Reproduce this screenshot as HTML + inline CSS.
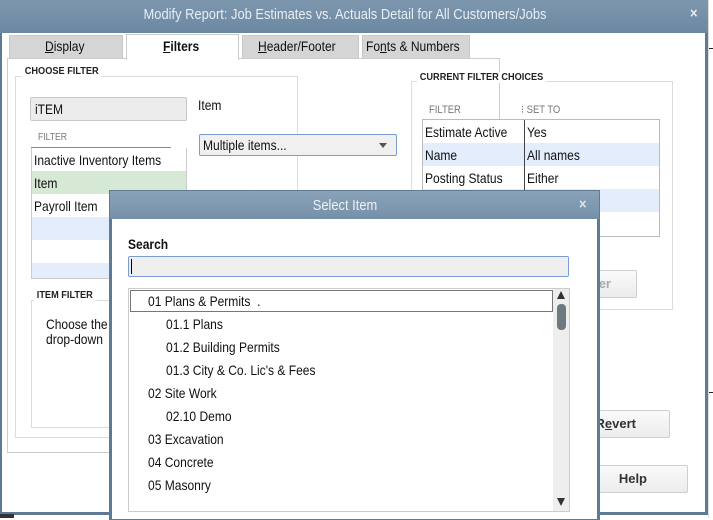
<!DOCTYPE html>
<html><head><style>
*{margin:0;padding:0;box-sizing:border-box}
body{width:713px;height:518px;overflow:hidden;background:#fff;font-family:"Liberation Sans",sans-serif;font-size:12px;color:#111;position:relative}
.a{position:absolute}
.t{position:absolute;white-space:nowrap;transform:scaleX(.86);transform-origin:0 0}
.c{transform-origin:50% 0}
.grp{position:absolute;border:1px solid #dcdcdc}
.gl{position:absolute;background:#fff;padding:0 3px;font-size:10px;font-weight:bold;color:#222;transform:scaleX(.92);transform-origin:0 0;white-space:nowrap}
.btn{position:absolute;border:1px solid #cfcfcf;border-radius:2px;background:linear-gradient(#fafafa,#ececec);font-size:13px;font-weight:bold;color:#333;text-align:center}
</style></head><body>
<div class="a" style="left:0;top:0;width:708px;height:515px;background:#5f7a93"></div>
<div class="a" style="left:0;top:0;width:708px;height:33px;background:linear-gradient(#7d97ae,#6c88a1)"></div>
<div class="t c" style="left:0;width:690px;top:6px;text-align:center;color:#e8eef3;font-size:15px">Modify Report: Job Estimates vs. Actuals Detail for All Customers/Jobs</div>
<div class="t" style="left:690px;top:5px;color:#e8eef3;font-size:15px;font-weight:bold">×</div>
<div class="a" style="left:2px;top:33px;width:703px;height:479px;background:#fff"></div>
<div class="a" style="left:708px;top:0;width:5px;height:518px;background:#fff;border-left:1px solid #ddd"></div>
<div class="a" style="left:709px;top:48px;width:4px;height:1px;background:#222"></div>
<div class="a" style="left:709px;top:392px;width:4px;height:1px;background:#222"></div>
<div class="a" style="left:0;top:514px;width:14px;height:4px;background:#333"></div>
<div class="a" style="left:9px;top:35px;width:114px;height:24px;background:#d5d5d5;border:1px solid #c8c8c8"></div>
<div class="t" style="left:45px;top:38px;font-size:14px"><u>D</u>isplay</div>
<div class="a" style="left:126px;top:34px;width:113px;height:26px;background:#fff;border:1px solid #ccc;border-bottom:none"></div>
<div class="t" style="left:163px;top:38px;font-size:14px;font-weight:bold"><u>F</u>ilters</div>
<div class="a" style="left:242px;top:35px;width:117px;height:24px;background:#d5d5d5;border:1px solid #c8c8c8"></div>
<div class="t" style="left:258px;top:38px;font-size:14px"><u>H</u>eader/Footer</div>
<div class="a" style="left:362px;top:35px;width:108px;height:24px;background:#d5d5d5;border:1px solid #c8c8c8"></div>
<div class="t" style="left:366px;top:38px;font-size:14px">Fo<u>n</u>ts &amp; Numbers</div>
<div class="a" style="left:7px;top:58px;width:493px;height:395px;border:1px solid #ccc"></div>
<div class="a" style="left:127px;top:58px;width:111px;height:2px;background:#fff"></div>
<div class="grp" style="left:15px;top:76px;width:283px;height:362px"></div>
<div class="gl" style="left:22px;top:66px">CHOOSE FILTER</div>
<div class="a" style="left:30px;top:97px;width:157px;height:24px;background:#ececec;border:1px solid #c8c8c8;border-radius:2px"></div>
<div class="t" style="left:35px;top:101px;font-size:14px">iTEM</div>
<div class="t" style="left:198px;top:97px;font-size:14px">Item</div>
<div class="t" style="left:38px;top:132px;font-size:10px;color:#777">FILTER</div>
<div class="a" style="left:31px;top:147px;width:140px;height:1px;background:#888"></div>
<div class="a" style="left:31px;top:148px;width:156px;height:131px;border:1px solid #ccc;border-top:none;background:#fff"></div>
<div class="a" style="left:32px;top:171px;width:154px;height:23px;background:#d6e9d4"></div>
<div class="a" style="left:32px;top:217px;width:154px;height:23px;background:#e3edfb"></div>
<div class="a" style="left:32px;top:263px;width:154px;height:15px;background:#e3edfb"></div>
<div class="t" style="left:34px;top:152px;font-size:14px">Inactive Inventory Items</div>
<div class="t" style="left:34px;top:175px;font-size:14px">Item</div>
<div class="t" style="left:34px;top:198px;font-size:14px">Payroll Item</div>
<div class="a" style="left:199px;top:134px;width:198px;height:22px;background:#f0f0f0;border:1px solid #7a9cd3;border-radius:2px"></div>
<div class="t" style="left:203px;top:137px;font-size:14px">Multiple items...</div>
<div class="a" style="left:379px;top:143px;width:0;height:0;border-left:4px solid transparent;border-right:4px solid transparent;border-top:5px solid #555"></div>
<div class="grp" style="left:31px;top:300px;width:100px;height:128px;border-right:none"></div>
<div class="gl" style="left:34px;top:290px">ITEM FILTER</div>
<div class="t" style="left:46px;top:316px;font-size:14px">Choose the</div>
<div class="t" style="left:46px;top:331px;font-size:14px">drop-down</div>
<div class="grp" style="left:411px;top:81px;width:262px;height:229px"></div>
<div class="gl" style="left:417px;top:72px">CURRENT FILTER CHOICES</div>
<div class="t" style="left:429px;top:104px;font-size:11px;color:#777">FILTER</div>
<div class="t" style="left:521px;top:103px;font-size:11px;color:#777">⁝ SET TO</div>
<div class="a" style="left:422px;top:119px;width:238px;height:118px;border:1px solid #bbb;background:#fff"></div>
<div class="a" style="left:423px;top:143px;width:236px;height:23px;background:#e3edfb"></div>
<div class="a" style="left:423px;top:189px;width:236px;height:23px;background:#e3edfb"></div>
<div class="a" style="left:524px;top:120px;width:1px;height:116px;background:#444"></div>
<div class="t" style="left:425px;top:124px;font-size:14px">Estimate Active</div><div class="t" style="left:527px;top:124px;font-size:14px">Yes</div>
<div class="t" style="left:425px;top:147px;font-size:14px">Name</div><div class="t" style="left:527px;top:147px;font-size:14px">All names</div>
<div class="t" style="left:425px;top:170px;font-size:14px">Posting Status</div><div class="t" style="left:527px;top:170px;font-size:14px">Either</div>
<div class="btn" style="left:560px;top:270px;width:77px;height:28px;line-height:26px;color:#aaa;text-align:right;padding-right:25px">er</div>
<div class="btn" style="left:560px;top:410px;width:110px;height:28px;line-height:26px;text-align:right;padding-right:33px">R<u>e</u>vert</div>
<div class="btn" style="left:560px;top:465px;width:128px;height:28px;line-height:26px;text-align:right;padding-right:40px">Help</div>
<div class="a" style="left:109px;top:190px;width:491px;height:330px;background:#5f7a93"></div>
<div class="a" style="left:110px;top:191px;width:489px;height:28px;background:linear-gradient(#8aa3b9,#7490a8)"></div>
<div class="t c" style="left:110px;width:470px;top:197px;text-align:center;color:#eef2f5;font-size:15px">Select Item</div>
<div class="t" style="left:579px;top:196px;color:#dfe6ec;font-size:15px;font-weight:bold">×</div>
<div class="a" style="left:112px;top:219px;width:485px;height:300px;background:#fff"></div>
<div class="t" style="left:128px;top:236px;font-size:14px;font-weight:bold">Search</div>
<div class="a" style="left:128px;top:256px;width:441px;height:21px;background:#efefef;border:1px solid #7a9cd3;border-radius:2px"></div>
<div class="a" style="left:131px;top:259px;width:1px;height:15px;background:#000"></div>
<div class="a" style="left:128px;top:288px;width:442px;height:224px;border:1px solid #ccc;background:#fff"></div>
<div class="a" style="left:130px;top:290px;width:423px;height:22px;border:1px solid #777"></div>
<div class="a" style="left:553px;top:289px;width:16px;height:222px;background:#eee"></div>
<div class="a" style="left:557px;top:291px;width:0;height:0;border-left:4px solid transparent;border-right:4px solid transparent;border-bottom:8px solid #333"></div>
<div class="a" style="left:557px;top:498px;width:0;height:0;border-left:4px solid transparent;border-right:4px solid transparent;border-top:8px solid #333"></div>
<div class="a" style="left:557px;top:304px;width:9px;height:26px;background:#6f7a80;border-radius:4px"></div>
<div class="t" style="left:148px;top:293px;font-size:14px">01 Plans &amp; Permits &nbsp;.</div>
<div class="t" style="left:166px;top:316px;font-size:14px">01.1 Plans</div>
<div class="t" style="left:166px;top:339px;font-size:14px">01.2 Building Permits</div>
<div class="t" style="left:166px;top:362px;font-size:14px">01.3 City &amp; Co. Lic's &amp; Fees</div>
<div class="t" style="left:148px;top:385px;font-size:14px">02 Site Work</div>
<div class="t" style="left:166px;top:408px;font-size:14px">02.10 Demo</div>
<div class="t" style="left:148px;top:431px;font-size:14px">03 Excavation</div>
<div class="t" style="left:148px;top:454px;font-size:14px">04 Concrete</div>
<div class="t" style="left:148px;top:477px;font-size:14px">05 Masonry</div>
</body></html>
